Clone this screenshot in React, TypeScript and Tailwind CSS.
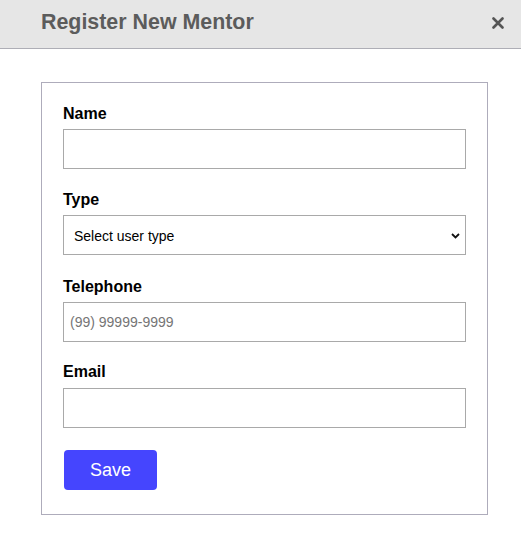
import React from "react";

export default function App() {
  const label = "block text-base leading-6 font-bold text-black mb-[3px]";
  const input =
    "block w-full h-10 border border-[#a9a9a9] bg-white px-[6px] text-[14px] text-black placeholder:text-[#757575] outline-none";
  return (
    <div className="w-[521px] h-[556px] bg-white font-['Liberation_Sans',Arial,sans-serif]">
      <div className="h-[49px] bg-[#e6e6e6] border-b border-[#aeaeb6] flex items-center justify-between pl-[41px] pr-[17px]">
        <h1 className="text-[21.4px] font-bold text-[#5c5c5c] leading-none -mt-[2px]">Register New Mentor</h1>
        <svg width="12" height="12" viewBox="0 0 12 12" className="-mt-[2px]">
          <path d="M1.5 1.5 L10.5 10.5 M10.5 1.5 L1.5 10.5" stroke="#555" strokeWidth="2.6" strokeLinecap="round" />
        </svg>
      </div>
      <div className="mt-[33px] ml-[41px] w-[447px] border border-[#aeacbb] pt-[19px] pb-[24px] px-[21px]">
        <div className="mb-[19px]">
          <label className={label}>Name</label>
          <input className={input} />
        </div>
        <div className="mb-[20px]">
          <label className={label}>Type</label>
          <div className="relative">
            <select className="block w-full h-10 border border-[#a9a9a9] bg-white pl-[10px] pt-[2px] text-[14px] text-black appearance-none outline-none">
              <option>Select user type</option>
            </select>
            <svg width="9" height="6" viewBox="0 0 9 6" className="absolute right-[6px] top-[18px] pointer-events-none">
              <path d="M1 1 L4.5 4.5 L8 1" stroke="#111" strokeWidth="1.8" fill="none" />
            </svg>
          </div>
        </div>
        <div className="mb-[19px]">
          <label className={label}>Telephone</label>
          <input className={input} placeholder="(99) 99999-9999" />
        </div>
        <div className="mb-[19px]">
          <label className="block text-base leading-6 font-bold text-black mb-[3px] -mt-[1px] pb-[1px]">Email</label>
          <input className={input} />
        </div>
        <button className="mt-[3px] w-[93px] h-10 rounded-[4px] bg-[#4545fe] text-white text-[18px] ml-[1px]">
          Save
        </button>
      </div>
    </div>
  );
}
